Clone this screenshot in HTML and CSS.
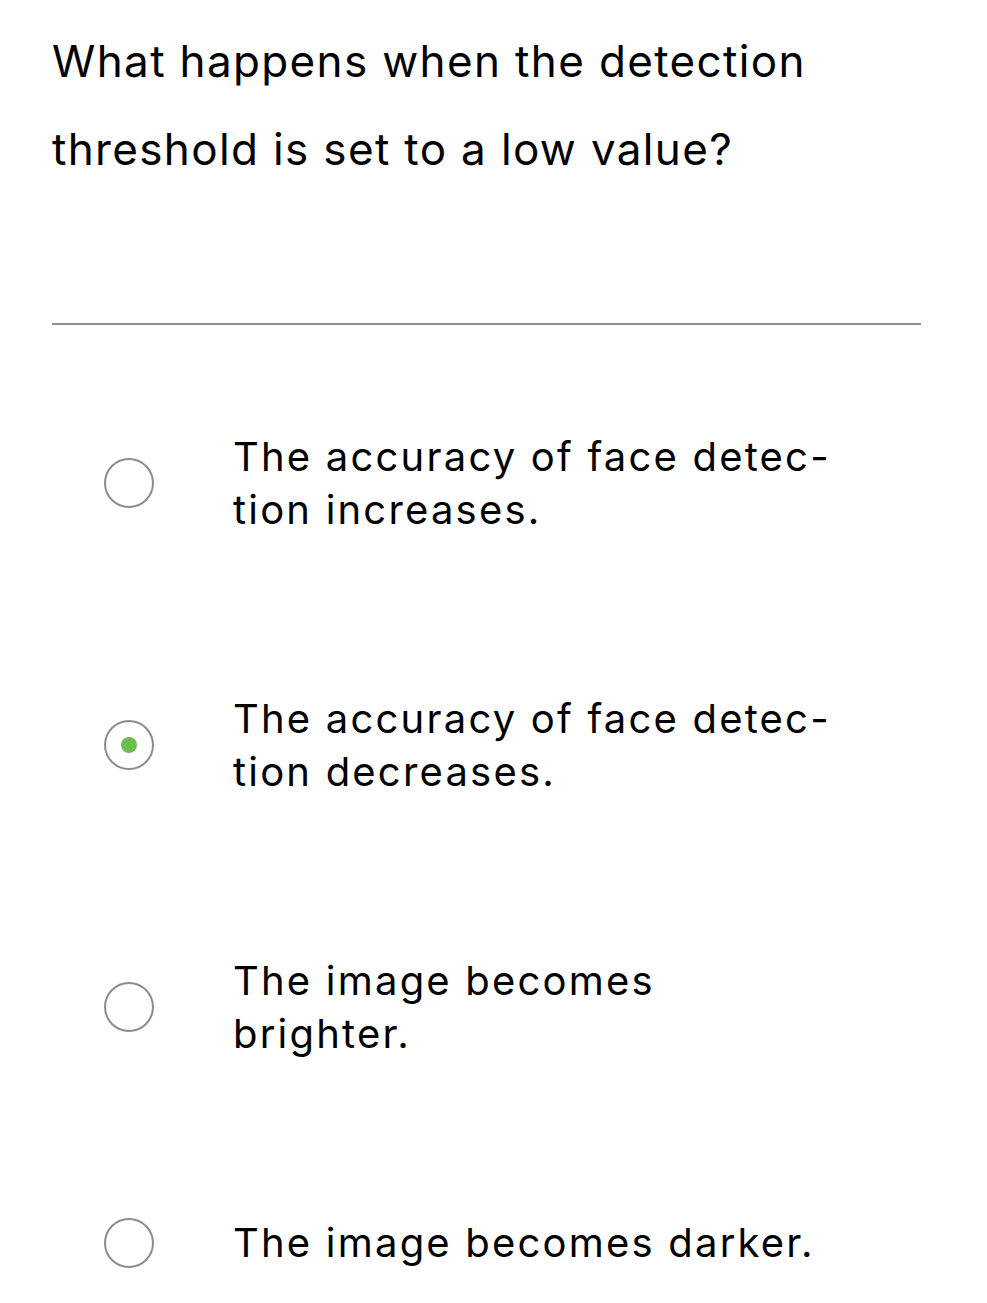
FILE: index.html
```html
<!DOCTYPE html>
<html lang="en">
<head>
<meta charset="utf-8">
<title>Quiz</title>
<link rel="stylesheet" href="styles.css">
</head>
<body>
<main class="quiz">
  <h1 class="question">What happens when the detection threshold is set to a low value?</h1>
  <hr class="divider">
  <ul class="options">
    <li class="option">
      <span class="radio"></span>
      <span class="label">The accuracy of face detec-<br>tion increases.</span>
    </li>
    <li class="option">
      <span class="radio checked"></span>
      <span class="label">The accuracy of face detec-<br>tion decreases.</span>
    </li>
    <li class="option">
      <span class="radio"></span>
      <span class="label">The image becomes<br>brighter.</span>
    </li>
    <li class="option">
      <span class="radio"></span>
      <span class="label">The image becomes darker.</span>
    </li>
  </ul>
</main>
</body>
</html>
```
FILE: styles.css
```css
html, body {
  margin: 0;
  padding: 0;
  background: #ffffff;
}
body {
  font-family: Inter, "Noto Sans", sans-serif;
  color: #000000;
}
.quiz {
  padding: 17px 66px 0 52px;
}
.question {
  margin: 0;
  font-size: 44px;
  font-weight: 400;
  line-height: 88px;
  letter-spacing: 1.35px;
  max-width: 840px;
}
.divider {
  margin: 130px 0 0 0;
  border: 0;
  height: 2px;
  background: #8f8f8f;
}
.options {
  list-style: none;
  margin: 0;
  padding: 105px 0 0 52px;
  display: flex;
  flex-direction: column;
  gap: 156px;
}
.option {
  display: flex;
  align-items: center;
  gap: 79px;
}
.radio {
  flex: none;
  width: 46px;
  height: 46px;
  border: 2px solid #8c8c8c;
  border-radius: 50%;
  display: flex;
  align-items: center;
  justify-content: center;
}
.radio.checked::after {
  content: "";
  width: 16px;
  height: 16px;
  border-radius: 50%;
  background: #6cbf4c;
}
.label {
  font-size: 40px;
  line-height: 53px;
  letter-spacing: 2.2px;
}
```
